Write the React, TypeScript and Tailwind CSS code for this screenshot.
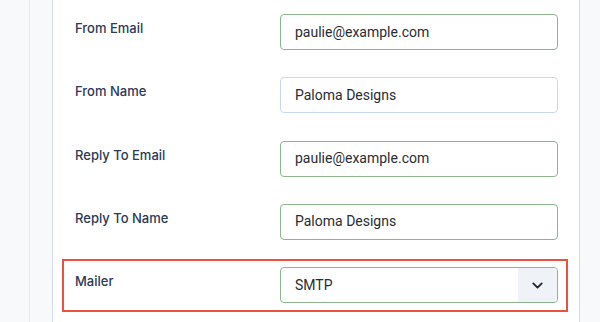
import React from 'react';

type Field = {
  label: string;
  value: string;
  border: string;
  select?: boolean;
  highlight?: boolean;
};

const fields: Field[] = [
  { label: 'From Email', value: 'paulie@example.com', border: 'border-[#8db48d]' },
  { label: 'From Name', value: 'Paloma Designs', border: 'border-[#c9d8ee]' },
  { label: 'Reply To Email', value: 'paulie@example.com', border: 'border-[#8db48d]' },
  { label: 'Reply To Name', value: 'Paloma Designs', border: 'border-[#8db48d]' },
  { label: 'Mailer', value: 'SMTP', border: 'border-[#8db48d]', select: true, highlight: true },
];

const Chevron = () => (
  <svg width="17" height="17" viewBox="0 0 24 24" fill="none" stroke="#1f2633" strokeWidth="2.6" strokeLinecap="round" strokeLinejoin="round">
    <path d="M6 9l6 6 6-6" />
  </svg>
);

const App: React.FC = () => {
  return (
    <div className="w-[600px] h-[322px] overflow-hidden bg-[#f8f9fa] flex pl-[29px] font-['Inter',sans-serif]">
      <div className="border-l border-[#e6e8ec] pl-[22px] h-full">
        <div className="w-[528px] h-full bg-white border-x border-[#cfdcef] pt-[6px] pl-[9px] pr-[11px] flex flex-col gap-[10.25px]">
          {fields.map((f) => (
            <div
              key={f.label}
              className={`flex items-start border-2 pl-[11px] pr-[8px] pt-[6px] pb-[7px] ${f.highlight ? 'border-[#e8523f]' : 'border-transparent'}`}
            >
              <div className="w-[205px] pt-[4px] text-[13px] font-medium leading-[20px] text-[#2b3a55]">{f.label}</div>
              <div
                className={`flex-1 h-[36px] rounded-[4px] border ${f.border} bg-white flex items-center overflow-hidden font-['Roboto',sans-serif] text-[14px] text-[#2a2c30]`}
              >
                <span className="pl-[14px] flex-1">{f.value}</span>
                {f.select && (
                  <span className="w-[39px] h-full bg-[#eff2f6] flex items-center justify-center">
                    <Chevron />
                  </span>
                )}
              </div>
            </div>
          ))}
        </div>
      </div>
    </div>
  );
};

export default App;
